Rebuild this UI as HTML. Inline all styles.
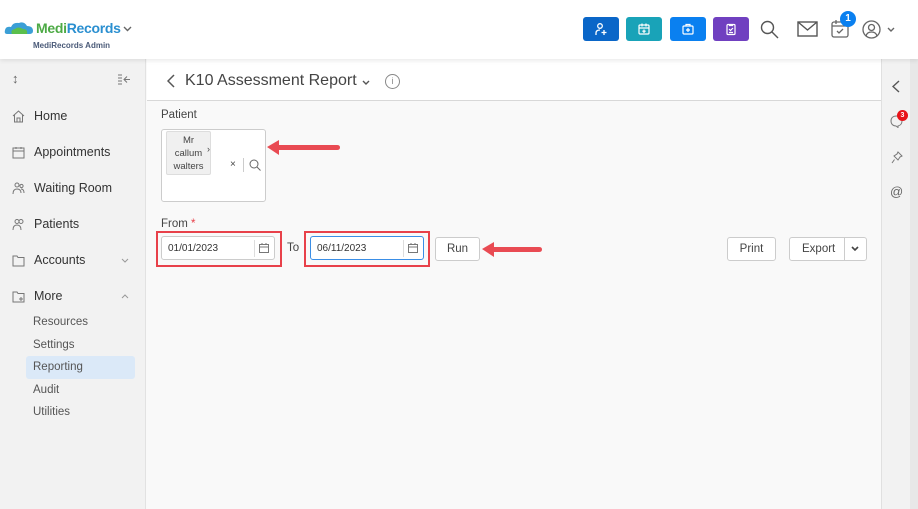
<!DOCTYPE html>
<html><head><meta charset="utf-8"><style>
*{box-sizing:border-box;margin:0;padding:0}
body{width:918px;height:509px;overflow:hidden;font-family:"Liberation Sans",sans-serif;background:#f9f9f9;position:relative;color:#333}
.hdr{position:absolute;left:0;top:0;width:918px;height:59px;background:#fff;box-shadow:0 2px 4px rgba(0,0,0,.08);z-index:3}
.side{position:absolute;left:0;top:59px;width:146px;height:450px;background:#f2f2f2;border-right:1px solid #e2e2e2}
.rp{position:absolute;left:881px;top:59px;width:29px;height:450px;background:#f2f2f2;border-left:1px solid #e0e0e0}
.edge{position:absolute;left:910px;top:0;width:8px;height:509px;background:#e8e8e8}
.title{position:absolute;left:147px;top:59px;width:734px;height:42px;background:#fff;border-bottom:1px solid #d8d8d8}
.nav{position:absolute;left:12px;font-size:12.5px;color:#333;display:flex;align-items:center}
.nav svg{margin-right:9px}
.sub{position:absolute;left:33px;font-size:11.5px;color:#555}
.btn{position:absolute;top:17px;width:36px;height:24px;border-radius:3px;display:flex;align-items:center;justify-content:center}
.inp{position:absolute;background:#fff;border:1px solid #ccc;border-radius:3px;font-size:10px;color:#333}
.red{position:absolute;border:2px solid #e8414a}
.ob{position:absolute;background:#fff;border:1px solid #ccc;border-radius:3px;font-size:11.5px;color:#444;display:flex;align-items:center;justify-content:center}
</style></head><body>
<div class="hdr">
 <svg style="position:absolute;left:4px;top:20px" width="30" height="16" viewBox="0 0 30 16"><path d="M3 14 Q0 14 1 10 Q2 6 7 7 Q9 2 15 3 Q20 1 23 6 Q29 6 29 11 Q29 14 25 14Z" fill="#3b9fd6"/><path d="M8 14 Q6 10 11 9 Q14 6 19 9 Q24 9 23 14Z" fill="#5bbf4c"/></svg>
 <div style="position:absolute;left:36px;top:20px;font-size:14px;font-weight:bold;color:#4daa45;letter-spacing:-.3px">Medi<span style="color:#2a8fd0">Records</span></div>
 <svg style="position:absolute;left:123px;top:26px" width="9" height="6" viewBox="0 0 9 6" fill="none" stroke="#666" stroke-width="1.4"><path d="M1 1l3.5 3.5L8 1"/></svg>
 <div style="position:absolute;left:33px;top:41px;font-size:8px;color:#4a5a78;font-weight:bold">MediRecords Admin</div>
 <div class="btn" style="left:583px;background:#0a66c8"><svg width="14" height="14" viewBox="0 0 14 14" fill="none" stroke="#fff" stroke-width="1.3"><circle cx="6" cy="4" r="2.3"/><path d="M2 13v-2q0-3 4-3M10 8v5M7.5 10.5h5"/></svg></div>
 <div class="btn" style="left:626px;background:#19a3b8"><svg width="14" height="14" viewBox="0 0 14 14" fill="none" stroke="#fff" stroke-width="1.2"><rect x="2" y="3" width="10" height="9" rx="1"/><path d="M2 6h10M5 1.5v3M9 1.5v3M7 7.5v3.5M5.3 9.2h3.4"/></svg></div>
 <div class="btn" style="left:670px;background:#0a80f0"><svg width="14" height="14" viewBox="0 0 14 14" fill="none" stroke="#fff" stroke-width="1.2"><rect x="2" y="4" width="10" height="8" rx="1"/><path d="M5 4V2.5h4V4M7 6v4M5 8h4"/></svg></div>
 <div class="btn" style="left:713px;background:#7040c0"><svg width="14" height="14" viewBox="0 0 14 14" fill="none" stroke="#fff" stroke-width="1.2"><rect x="3" y="2.5" width="8" height="10" rx="1"/><path d="M5.5 2v1.5h3V2M5 7l1.5 1.5L9 6M5 10.5h4"/></svg></div>
 <svg style="position:absolute;left:760px;top:20px" width="19" height="19" viewBox="0 0 19 19" fill="none" stroke="#555" stroke-width="1.4"><circle cx="7.5" cy="7.5" r="6"/><path d="M12 12l6 6"/></svg>
 <svg style="position:absolute;left:797px;top:21px" width="21" height="16" viewBox="0 0 21 16" fill="none" stroke="#555" stroke-width="1.4"><rect x="1" y="1" width="19" height="14"/><path d="M1 1l9.5 8L20 1"/></svg>
 <svg style="position:absolute;left:831px;top:19px" width="18" height="19" viewBox="0 0 18 19" fill="none" stroke="#666" stroke-width="1.3"><rect x="1" y="3" width="16" height="15" rx="2"/><path d="M1 7h16M5 1v4M13 1v4M6 12l2 2 4-4"/></svg>
 <div style="position:absolute;left:840px;top:11px;width:16px;height:16px;border-radius:50%;background:#0a80f0;color:#fff;font-size:10px;font-weight:bold;text-align:center;line-height:16px">1</div>
 <svg style="position:absolute;left:862px;top:20px" width="19" height="19" viewBox="0 0 19 19" fill="none" stroke="#666" stroke-width="1.3"><circle cx="9.5" cy="9.5" r="8.5"/><circle cx="9.5" cy="7.5" r="3"/><path d="M4 16q1-4 5.5-4t5.5 4"/></svg>
 <svg style="position:absolute;left:887px;top:27px" width="8" height="5" viewBox="0 0 8 5" fill="none" stroke="#666" stroke-width="1.4"><path d="M1 1l3 3 3-3"/></svg>
</div>
<div class="side">
 <div style="position:absolute;left:12px;top:12px;font-size:13px;color:#666">↕</div>
 <svg style="position:absolute;left:117px;top:15px" width="14" height="11" viewBox="0 0 14 11" fill="none" stroke="#777" stroke-width="1"><path d="M1 1h4M1 4h4M1 7h4M1 10h4M13 5.5H7M10 2.5L7 5.5l3 3"/></svg>
 <div class="nav" style="top:50px"><svg width="13" height="13" viewBox="0 0 13 13" fill="none" stroke="#777"><path d="M1 6L6.5 1 12 6M2.5 5v7h8V5M5 12V8h3v4"/></svg>Home</div>
 <div class="nav" style="top:86px"><svg width="13" height="13" viewBox="0 0 13 13" fill="none" stroke="#777"><rect x="1" y="2" width="11" height="10"/><path d="M1 5h11M4 1v2M9 1v2"/></svg>Appointments</div>
 <div class="nav" style="top:122px"><svg width="13" height="13" viewBox="0 0 13 13" fill="none" stroke="#777"><circle cx="5" cy="3" r="2"/><circle cx="9.5" cy="4" r="1.6"/><path d="M1 12q0-5 4-5t4 4M9 7q3 0 3 4"/></svg>Waiting Room</div>
 <div class="nav" style="top:158px"><svg width="13" height="13" viewBox="0 0 13 13" fill="none" stroke="#777"><circle cx="5" cy="3.5" r="2"/><circle cx="9" cy="3.5" r="2"/><path d="M1 12q0-5 4-5t4 5"/></svg>Patients</div>
 <div class="nav" style="top:194px"><svg width="13" height="13" viewBox="0 0 13 13" fill="none" stroke="#777"><path d="M1 2h4l1 1.5h6V12H1z"/></svg>Accounts</div>
 <svg style="position:absolute;left:121px;top:199px" width="8" height="5" viewBox="0 0 8 5" fill="none" stroke="#999"><path d="M1 1l3 3 3-3"/></svg>
 <div class="nav" style="top:230px"><svg width="13" height="13" viewBox="0 0 13 13" fill="none" stroke="#777"><path d="M1 2h4l1 1.5h6V12H1zM9 7v4M7 9h4"/></svg>More</div>
 <svg style="position:absolute;left:121px;top:235px" width="8" height="5" viewBox="0 0 8 5" fill="none" stroke="#999"><path d="M1 4l3-3 3 3"/></svg>
 <div class="sub" style="top:257px">Resources</div>
 <div class="sub" style="top:280px">Settings</div>
 <div style="position:absolute;left:26px;top:297px;width:109px;height:23px;background:#dbe9f8;border-radius:3px"></div>
 <div class="sub" style="top:302px">Reporting</div>
 <div class="sub" style="top:325px">Audit</div>
 <div class="sub" style="top:347px">Utilities</div>
</div>
<div class="title">
 <svg style="position:absolute;left:20px;top:15px" width="8" height="14" viewBox="0 0 8 14" fill="none" stroke="#555" stroke-width="1.5"><path d="M7 1L1 7l6 6"/></svg>
 <div style="position:absolute;left:38px;top:13px;font-size:16px;color:#444">K10 Assessment Report</div>
 <svg style="position:absolute;left:215px;top:21px" width="8" height="5" viewBox="0 0 8 5" fill="none" stroke="#555" stroke-width="1.4"><path d="M1 1l3 3 3-3"/></svg>
 <div style="position:absolute;left:238px;top:15px;width:15px;height:15px;border:1px solid #888;border-radius:50%;font-size:9px;color:#888;text-align:center;line-height:13px">i</div>
</div>
<div style="position:absolute;left:161px;top:109px;font-size:11.5px;color:#444">Patient</div>
<div class="inp" style="left:161px;top:129px;width:105px;height:73px"></div>
<div style="position:absolute;left:166px;top:131px;width:45px;height:44px;background:#f0f0f0;border:1px solid #ddd;border-radius:2px;font-size:9.5px;color:#444;text-align:center;line-height:13px;padding-top:2px">Mr<br>callum<br>walters</div>
<div style="position:absolute;left:207px;top:144px;font-size:9px;color:#444">›</div>
<div style="position:absolute;left:230px;top:159px;font-size:10px;color:#444">×</div>
<div style="position:absolute;left:243px;top:158px;width:1px;height:14px;background:#ccc"></div>
<svg style="position:absolute;left:249px;top:159px" width="12" height="12" viewBox="0 0 12 12" fill="none" stroke="#666"><circle cx="5" cy="5" r="4"/><path d="M8 8l3.5 3.5"/></svg>
<svg style="position:absolute;left:265px;top:138px" width="75" height="18" viewBox="0 0 75 18"><path d="M2 9L14 2v5h58q3 0 3 2.5T72 12H14v5z" fill="#e8414a" opacity=".95"/></svg>
<div style="position:absolute;left:161px;top:218px;font-size:11.5px;color:#444">From <span style="color:#e8414a">*</span></div>
<div class="red" style="left:156px;top:231px;width:126px;height:36px"></div>
<div class="inp" style="left:161px;top:236px;width:114px;height:24px;padding:6px 0 0 6px">01/01/2023</div>
<div style="position:absolute;left:254px;top:240px;width:1px;height:17px;background:#ddd"></div>
<svg style="position:absolute;left:259px;top:243px" width="10" height="10" viewBox="0 0 10 10" fill="none" stroke="#777"><rect x=".5" y="1.5" width="9" height="8"/><path d="M.5 4h9M3 0v2M7 0v2"/></svg>
<div style="position:absolute;left:287px;top:242px;font-size:11.5px;color:#444">To</div>
<div class="red" style="left:304px;top:231px;width:126px;height:36px"></div>
<div class="inp" style="left:310px;top:236px;width:114px;height:24px;padding:6px 0 0 6px;border-color:#3a8ee6">06/11/2023</div>
<div style="position:absolute;left:403px;top:240px;width:1px;height:17px;background:#ddd"></div>
<svg style="position:absolute;left:408px;top:243px" width="10" height="10" viewBox="0 0 10 10" fill="none" stroke="#777"><rect x=".5" y="1.5" width="9" height="8"/><path d="M.5 4h9M3 0v2M7 0v2"/></svg>
<div class="ob" style="left:435px;top:237px;width:45px;height:24px">Run</div>
<svg style="position:absolute;left:480px;top:240px" width="62" height="18" viewBox="0 0 62 18"><path d="M2 9L14 2v5h45q3 0 3 2.5T59 12H14v5z" fill="#e8414a" opacity=".95"/></svg>
<div class="ob" style="left:727px;top:237px;width:49px;height:24px">Print</div>
<div class="ob" style="left:789px;top:237px;width:78px;height:24px;justify-content:flex-start;padding-left:12px">Export</div>
<div style="position:absolute;left:844px;top:238px;width:1px;height:22px;background:#ccc"></div>
<svg style="position:absolute;left:851px;top:246px" width="8" height="5" viewBox="0 0 8 5" fill="none" stroke="#444" stroke-width="1.6"><path d="M1 1l3 3 3-3"/></svg>
<div class="rp">
 <svg style="position:absolute;left:10px;top:21px" width="8" height="13" viewBox="0 0 8 13" fill="none" stroke="#555" stroke-width="1.4"><path d="M7 1L1 6.5 7 12"/></svg>
 <svg style="position:absolute;left:8px;top:56px" width="13" height="13" viewBox="0 0 13 13" fill="none" stroke="#777"><path d="M6.5 1C3 1 1 3 1 6s2 5 5 5l2 1.5V11c2.5-.5 4-2.5 4-5S10 1 6.5 1z"/></svg>
 <div style="position:absolute;left:15px;top:51px;width:11px;height:11px;border-radius:50%;background:#e8141a;color:#fff;font-size:7px;text-align:center;line-height:11px;font-weight:bold">3</div>
 <svg style="position:absolute;left:9px;top:92px" width="12" height="13" viewBox="0 0 12 13" fill="none" stroke="#777"><path d="M7 1l4 4-2 1-2 3-4-4 3-2zM3.5 8.5L1 12"/></svg>
 <div style="position:absolute;left:8px;top:125px;font-size:13px;color:#666">@</div>
</div>
<div class="edge"></div>
</body></html>
